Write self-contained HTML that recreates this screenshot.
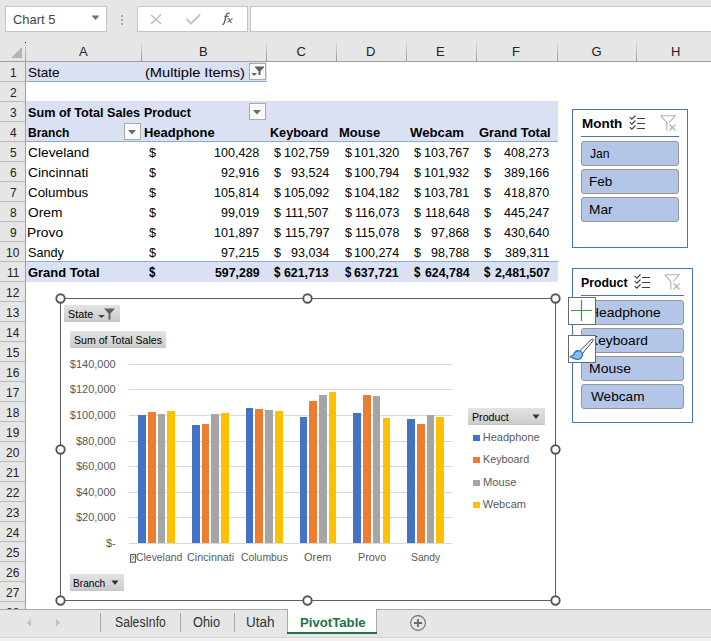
<!DOCTYPE html>
<html><head><meta charset="utf-8">
<style>
*{margin:0;padding:0;box-sizing:border-box}
html,body{width:711px;height:641px;overflow:hidden;background:#fff;font-family:"Liberation Sans",sans-serif;position:relative}
.a{position:absolute}
.t{position:absolute;white-space:nowrap;line-height:1;transform-origin:0 0}
</style></head><body>
<div class="a" style="left:0px;top:0px;width:711px;height:62px;background:#e6e6e6"></div>
<div class="a" style="left:5px;top:6px;width:102px;height:26px;background:#fff;border:1px solid #c6c6c6"></div>
<div class="t" style="left:12.70px;top:13.00px;font-size:13px;color:#444;transform:scaleX(0.9953);">Chart 5</div>
<svg class="a" style="left:91px;top:15px" width="10" height="6"><path d="M0.5 0.5 L8.5 0.5 L4.5 5 Z" fill="#707070"/></svg>
<div class="a" style="left:121px;top:15px;width:2px;height:2px;background:#a8a8a8"></div>
<div class="a" style="left:121px;top:19px;width:2px;height:2px;background:#a8a8a8"></div>
<div class="a" style="left:121px;top:23px;width:2px;height:2px;background:#a8a8a8"></div>
<div class="a" style="left:137px;top:6px;width:111px;height:26px;background:#fff;border:1px solid #c6c6c6"></div>
<div class="a" style="left:250px;top:6px;width:470px;height:26px;background:#fff;border:1px solid #c6c6c6"></div>
<svg class="a" style="left:149px;top:13px" width="16" height="14"><path d="M2 2 L12 11 M12 1.5 L2 11" stroke="#bdbdbd" stroke-width="1.6" fill="none"/></svg>
<svg class="a" style="left:185px;top:12px" width="18" height="14"><path d="M1.5 7 L6 11.5 L15 2.5" stroke="#c4c4c4" stroke-width="2" fill="none"/></svg>
<svg class="a" style="left:215px;top:8px" width="30" height="22"><path d="M7.3 16.3 Q8.6 16.8 9.4 14.5 L11.3 7 Q12 4.6 14.6 5.5" stroke="#666" stroke-width="1.4" fill="none"/><path d="M9.2 8.4 H13.6" stroke="#666" stroke-width="1.2"/><path d="M12.6 10.7 Q14 10 14.8 12 L15.6 14 Q16 14.6 17 14 M17.6 10.6 Q16.5 11 14.2 13.2 Q13.2 14.2 12.2 14.2" stroke="#666" stroke-width="1.1" fill="none"/></svg>
<div class="a" style="left:0px;top:61px;width:711px;height:1px;background:#9e9e9e"></div>
<div class="a" style="left:0px;top:62px;width:26px;height:547px;background:#e6e6e6"></div>
<div class="a" style="left:25px;top:43px;width:1px;height:18px;background:linear-gradient(#d8d8d8,#9a9a9a)"></div>
<div class="a" style="left:25px;top:61px;width:1px;height:548px;background:#9e9e9e"></div>
<div class="a" style="left:25px;top:42px;width:1px;height:1px;background:#000"></div>
<svg class="a" style="left:10px;top:46px" width="13" height="13"><path d="M12 1 L12 12 L1 12 Z" fill="#b5b5b5"/></svg>
<div class="a" style="left:141px;top:42px;width:1px;height:19px;background:linear-gradient(#dadada,#9a9a9a)"></div>
<div class="a" style="left:266px;top:42px;width:1px;height:19px;background:linear-gradient(#dadada,#9a9a9a)"></div>
<div class="a" style="left:336px;top:42px;width:1px;height:19px;background:linear-gradient(#dadada,#9a9a9a)"></div>
<div class="a" style="left:406px;top:42px;width:1px;height:19px;background:linear-gradient(#dadada,#9a9a9a)"></div>
<div class="a" style="left:476px;top:42px;width:1px;height:19px;background:linear-gradient(#dadada,#9a9a9a)"></div>
<div class="a" style="left:557px;top:42px;width:1px;height:19px;background:linear-gradient(#dadada,#9a9a9a)"></div>
<div class="a" style="left:636px;top:42px;width:1px;height:19px;background:linear-gradient(#dadada,#9a9a9a)"></div>
<div class="t" style="left:79.00px;top:45.00px;font-size:13px;color:#222;">A</div>
<div class="t" style="left:199.00px;top:45.00px;font-size:13px;color:#222;">B</div>
<div class="t" style="left:296.50px;top:45.00px;font-size:13px;color:#222;">C</div>
<div class="t" style="left:366.00px;top:45.00px;font-size:13px;color:#222;">D</div>
<div class="t" style="left:436.00px;top:45.00px;font-size:13px;color:#222;">E</div>
<div class="t" style="left:512.00px;top:45.00px;font-size:13px;color:#222;">F</div>
<div class="t" style="left:591.50px;top:45.00px;font-size:13px;color:#222;">G</div>
<div class="t" style="left:671.00px;top:45.00px;font-size:13px;color:#222;">H</div>
<div class="a" style="left:0px;top:81px;width:25px;height:1px;background:#b9b9b9"></div>
<div class="t" style="left:9.58px;top:66.00px;font-size:13px;color:#222;transform:scaleX(0.9200);">1</div>
<div class="a" style="left:0px;top:101px;width:25px;height:1px;background:#b9b9b9"></div>
<div class="t" style="left:9.58px;top:86.00px;font-size:13px;color:#222;transform:scaleX(0.9200);">2</div>
<div class="a" style="left:0px;top:121px;width:25px;height:1px;background:#b9b9b9"></div>
<div class="t" style="left:9.58px;top:106.00px;font-size:13px;color:#222;transform:scaleX(0.9200);">3</div>
<div class="a" style="left:0px;top:141px;width:25px;height:1px;background:#b9b9b9"></div>
<div class="t" style="left:9.58px;top:126.00px;font-size:13px;color:#222;transform:scaleX(0.9200);">4</div>
<div class="a" style="left:0px;top:161px;width:25px;height:1px;background:#b9b9b9"></div>
<div class="t" style="left:9.58px;top:146.00px;font-size:13px;color:#222;transform:scaleX(0.9200);">5</div>
<div class="a" style="left:0px;top:181px;width:25px;height:1px;background:#b9b9b9"></div>
<div class="t" style="left:9.58px;top:166.00px;font-size:13px;color:#222;transform:scaleX(0.9200);">6</div>
<div class="a" style="left:0px;top:201px;width:25px;height:1px;background:#b9b9b9"></div>
<div class="t" style="left:9.58px;top:186.00px;font-size:13px;color:#222;transform:scaleX(0.9200);">7</div>
<div class="a" style="left:0px;top:221px;width:25px;height:1px;background:#b9b9b9"></div>
<div class="t" style="left:9.58px;top:206.00px;font-size:13px;color:#222;transform:scaleX(0.9200);">8</div>
<div class="a" style="left:0px;top:241px;width:25px;height:1px;background:#b9b9b9"></div>
<div class="t" style="left:9.58px;top:226.00px;font-size:13px;color:#222;transform:scaleX(0.9200);">9</div>
<div class="a" style="left:0px;top:261px;width:25px;height:1px;background:#b9b9b9"></div>
<div class="t" style="left:6.25px;top:246.00px;font-size:13px;color:#222;transform:scaleX(0.9200);">10</div>
<div class="a" style="left:0px;top:281px;width:25px;height:1px;background:#b9b9b9"></div>
<div class="t" style="left:6.70px;top:266.00px;font-size:13px;color:#222;transform:scaleX(0.9200);">11</div>
<div class="a" style="left:0px;top:301px;width:25px;height:1px;background:#b9b9b9"></div>
<div class="t" style="left:6.25px;top:286.00px;font-size:13px;color:#222;transform:scaleX(0.9200);">12</div>
<div class="a" style="left:0px;top:321px;width:25px;height:1px;background:#b9b9b9"></div>
<div class="t" style="left:6.25px;top:306.00px;font-size:13px;color:#222;transform:scaleX(0.9200);">13</div>
<div class="a" style="left:0px;top:341px;width:25px;height:1px;background:#b9b9b9"></div>
<div class="t" style="left:6.25px;top:326.00px;font-size:13px;color:#222;transform:scaleX(0.9200);">14</div>
<div class="a" style="left:0px;top:361px;width:25px;height:1px;background:#b9b9b9"></div>
<div class="t" style="left:6.25px;top:346.00px;font-size:13px;color:#222;transform:scaleX(0.9200);">15</div>
<div class="a" style="left:0px;top:381px;width:25px;height:1px;background:#b9b9b9"></div>
<div class="t" style="left:6.25px;top:366.00px;font-size:13px;color:#222;transform:scaleX(0.9200);">16</div>
<div class="a" style="left:0px;top:401px;width:25px;height:1px;background:#b9b9b9"></div>
<div class="t" style="left:6.25px;top:386.00px;font-size:13px;color:#222;transform:scaleX(0.9200);">17</div>
<div class="a" style="left:0px;top:421px;width:25px;height:1px;background:#b9b9b9"></div>
<div class="t" style="left:6.25px;top:406.00px;font-size:13px;color:#222;transform:scaleX(0.9200);">18</div>
<div class="a" style="left:0px;top:441px;width:25px;height:1px;background:#b9b9b9"></div>
<div class="t" style="left:6.25px;top:426.00px;font-size:13px;color:#222;transform:scaleX(0.9200);">19</div>
<div class="a" style="left:0px;top:461px;width:25px;height:1px;background:#b9b9b9"></div>
<div class="t" style="left:6.25px;top:446.00px;font-size:13px;color:#222;transform:scaleX(0.9200);">20</div>
<div class="a" style="left:0px;top:481px;width:25px;height:1px;background:#b9b9b9"></div>
<div class="t" style="left:6.25px;top:466.00px;font-size:13px;color:#222;transform:scaleX(0.9200);">21</div>
<div class="a" style="left:0px;top:501px;width:25px;height:1px;background:#b9b9b9"></div>
<div class="t" style="left:6.25px;top:486.00px;font-size:13px;color:#222;transform:scaleX(0.9200);">22</div>
<div class="a" style="left:0px;top:521px;width:25px;height:1px;background:#b9b9b9"></div>
<div class="t" style="left:6.25px;top:506.00px;font-size:13px;color:#222;transform:scaleX(0.9200);">23</div>
<div class="a" style="left:0px;top:541px;width:25px;height:1px;background:#b9b9b9"></div>
<div class="t" style="left:6.25px;top:526.00px;font-size:13px;color:#222;transform:scaleX(0.9200);">24</div>
<div class="a" style="left:0px;top:561px;width:25px;height:1px;background:#b9b9b9"></div>
<div class="t" style="left:6.25px;top:546.00px;font-size:13px;color:#222;transform:scaleX(0.9200);">25</div>
<div class="a" style="left:0px;top:581px;width:25px;height:1px;background:#b9b9b9"></div>
<div class="t" style="left:6.25px;top:566.00px;font-size:13px;color:#222;transform:scaleX(0.9200);">26</div>
<div class="a" style="left:0px;top:601px;width:25px;height:1px;background:#b9b9b9"></div>
<div class="t" style="left:6.25px;top:586.00px;font-size:13px;color:#222;transform:scaleX(0.9200);">27</div>
<div class="a" style="left:0px;top:621px;width:25px;height:1px;background:#b9b9b9"></div>
<div class="t" style="left:6.25px;top:606.00px;font-size:13px;color:#222;transform:scaleX(0.9200);">28</div>
<div class="a" style="left:26px;top:62px;width:241px;height:19px;background:#d9e1f2"></div>
<div class="a" style="left:26px;top:81px;width:241px;height:1px;background:#8ea9db"></div>
<div class="a" style="left:26px;top:101px;width:532px;height:40px;background:#d9e1f2"></div>
<div class="a" style="left:26px;top:141px;width:532px;height:1px;background:#8ea9db"></div>
<div class="a" style="left:26px;top:261px;width:532px;height:1px;background:#8ea9db"></div>
<div class="a" style="left:26px;top:262px;width:532px;height:20px;background:#d9e1f2"></div>
<div class="t" style="left:28.10px;top:66.00px;font-size:13px;color:#000;transform:scaleX(1.0423);">State</div>
<div class="t" style="left:144.60px;top:66.00px;font-size:13px;color:#000;transform:scaleX(1.1252);">(Multiple Items)</div>
<div class="a" style="left:249px;top:63px;width:17px;height:17px;background:#fafafa;border:1px solid #a9a9a9"></div>
<svg class="a" style="left:249px;top:63px" width="17" height="17"><path d="M2.5 10 L8 10 L5.2 13 Z" fill="#606060"/><path d="M6 3.5 L15 3.5 L15 4.5 L11.5 8 L11.5 12 L9.5 12 L9.5 8 L6 4.5 Z" fill="#606060"/></svg>
<div class="t" style="left:28.20px;top:105.57px;font-size:13.5px;font-weight:bold;color:#000;transform:scaleX(0.9357);">Sum of Total Sales</div>
<div class="t" style="left:144.30px;top:105.57px;font-size:13.5px;font-weight:bold;color:#000;transform:scaleX(0.9184);">Product</div>
<div class="a" style="left:249px;top:103px;width:17px;height:17px;background:#fafafa;border:1px solid #a9a9a9"></div>
<svg class="a" style="left:253px;top:110px" width="9" height="5"><path d="M0 0 L8 0 L4 4.5 Z" fill="#6a6a6a"/></svg>
<div class="t" style="left:28.20px;top:125.57px;font-size:13.5px;font-weight:bold;color:#000;transform:scaleX(0.8905);">Branch</div>
<div class="a" style="left:124px;top:123px;width:17px;height:17px;background:#fafafa;border:1px solid #a9a9a9"></div>
<svg class="a" style="left:128px;top:130px" width="9" height="5"><path d="M0 0 L8 0 L4 4.5 Z" fill="#6a6a6a"/></svg>
<div class="t" style="left:144.30px;top:125.57px;font-size:13.5px;font-weight:bold;color:#000;transform:scaleX(0.9608);">Headphone</div>
<div class="t" style="left:269.50px;top:125.57px;font-size:13.5px;font-weight:bold;color:#000;transform:scaleX(0.9352);">Keyboard</div>
<div class="t" style="left:339.20px;top:125.57px;font-size:13.5px;font-weight:bold;color:#000;transform:scaleX(0.9619);">Mouse</div>
<div class="t" style="left:409.50px;top:125.57px;font-size:13.5px;font-weight:bold;color:#000;transform:scaleX(0.9770);">Webcam</div>
<div class="t" style="left:479.20px;top:125.57px;font-size:13.5px;font-weight:bold;color:#000;transform:scaleX(0.9595);">Grand Total</div>
<div class="t" style="left:28.40px;top:146.00px;font-size:13px;color:#000;transform:scaleX(1.0576);">Cleveland</div>
<div class="t" style="left:149.20px;top:146.00px;font-size:13px;color:#000;transform:scaleX(0.9640);">$</div>
<div class="t" style="left:214.12px;top:146.00px;font-size:13px;color:#000;transform:scaleX(0.9640);">100,428</div>
<div class="t" style="left:274.20px;top:146.00px;font-size:13px;color:#000;transform:scaleX(0.9640);">$</div>
<div class="t" style="left:283.62px;top:146.00px;font-size:13px;color:#000;transform:scaleX(0.9640);">102,759</div>
<div class="t" style="left:345.20px;top:146.00px;font-size:13px;color:#000;transform:scaleX(0.9640);">$</div>
<div class="t" style="left:353.82px;top:146.00px;font-size:13px;color:#000;transform:scaleX(0.9640);">101,320</div>
<div class="t" style="left:414.20px;top:146.00px;font-size:13px;color:#000;transform:scaleX(0.9640);">$</div>
<div class="t" style="left:423.62px;top:146.00px;font-size:13px;color:#000;transform:scaleX(0.9640);">103,767</div>
<div class="t" style="left:484.20px;top:146.00px;font-size:13px;color:#000;transform:scaleX(0.9640);">$</div>
<div class="t" style="left:504.42px;top:146.00px;font-size:13px;color:#000;transform:scaleX(0.9640);">408,273</div>
<div class="t" style="left:28.40px;top:166.00px;font-size:13px;color:#000;transform:scaleX(1.0560);">Cincinnati</div>
<div class="t" style="left:149.20px;top:166.00px;font-size:13px;color:#000;transform:scaleX(0.9640);">$</div>
<div class="t" style="left:221.09px;top:166.00px;font-size:13px;color:#000;transform:scaleX(0.9640);">92,916</div>
<div class="t" style="left:274.20px;top:166.00px;font-size:13px;color:#000;transform:scaleX(0.9640);">$</div>
<div class="t" style="left:290.59px;top:166.00px;font-size:13px;color:#000;transform:scaleX(0.9640);">93,524</div>
<div class="t" style="left:345.20px;top:166.00px;font-size:13px;color:#000;transform:scaleX(0.9640);">$</div>
<div class="t" style="left:353.82px;top:166.00px;font-size:13px;color:#000;transform:scaleX(0.9640);">100,794</div>
<div class="t" style="left:414.20px;top:166.00px;font-size:13px;color:#000;transform:scaleX(0.9640);">$</div>
<div class="t" style="left:423.62px;top:166.00px;font-size:13px;color:#000;transform:scaleX(0.9640);">101,932</div>
<div class="t" style="left:484.20px;top:166.00px;font-size:13px;color:#000;transform:scaleX(0.9640);">$</div>
<div class="t" style="left:504.42px;top:166.00px;font-size:13px;color:#000;transform:scaleX(0.9640);">389,166</div>
<div class="t" style="left:28.40px;top:186.00px;font-size:13px;color:#000;transform:scaleX(1.0301);">Columbus</div>
<div class="t" style="left:149.20px;top:186.00px;font-size:13px;color:#000;transform:scaleX(0.9640);">$</div>
<div class="t" style="left:214.12px;top:186.00px;font-size:13px;color:#000;transform:scaleX(0.9640);">105,814</div>
<div class="t" style="left:274.20px;top:186.00px;font-size:13px;color:#000;transform:scaleX(0.9640);">$</div>
<div class="t" style="left:283.62px;top:186.00px;font-size:13px;color:#000;transform:scaleX(0.9640);">105,092</div>
<div class="t" style="left:345.20px;top:186.00px;font-size:13px;color:#000;transform:scaleX(0.9640);">$</div>
<div class="t" style="left:353.82px;top:186.00px;font-size:13px;color:#000;transform:scaleX(0.9640);">104,182</div>
<div class="t" style="left:414.20px;top:186.00px;font-size:13px;color:#000;transform:scaleX(0.9640);">$</div>
<div class="t" style="left:423.62px;top:186.00px;font-size:13px;color:#000;transform:scaleX(0.9640);">103,781</div>
<div class="t" style="left:484.20px;top:186.00px;font-size:13px;color:#000;transform:scaleX(0.9640);">$</div>
<div class="t" style="left:504.42px;top:186.00px;font-size:13px;color:#000;transform:scaleX(0.9640);">418,870</div>
<div class="t" style="left:28.40px;top:206.00px;font-size:13px;color:#000;transform:scaleX(1.0578);">Orem</div>
<div class="t" style="left:149.20px;top:206.00px;font-size:13px;color:#000;transform:scaleX(0.9640);">$</div>
<div class="t" style="left:221.09px;top:206.00px;font-size:13px;color:#000;transform:scaleX(0.9640);">99,019</div>
<div class="t" style="left:274.20px;top:206.00px;font-size:13px;color:#000;transform:scaleX(0.9640);">$</div>
<div class="t" style="left:285.48px;top:206.00px;font-size:13px;color:#000;transform:scaleX(0.9640);">111,507</div>
<div class="t" style="left:345.20px;top:206.00px;font-size:13px;color:#000;transform:scaleX(0.9640);">$</div>
<div class="t" style="left:354.75px;top:206.00px;font-size:13px;color:#000;transform:scaleX(0.9640);">116,073</div>
<div class="t" style="left:414.20px;top:206.00px;font-size:13px;color:#000;transform:scaleX(0.9640);">$</div>
<div class="t" style="left:424.55px;top:206.00px;font-size:13px;color:#000;transform:scaleX(0.9640);">118,648</div>
<div class="t" style="left:484.20px;top:206.00px;font-size:13px;color:#000;transform:scaleX(0.9640);">$</div>
<div class="t" style="left:504.42px;top:206.00px;font-size:13px;color:#000;transform:scaleX(0.9640);">445,247</div>
<div class="t" style="left:27.34px;top:226.00px;font-size:13px;color:#000;transform:scaleX(1.0632);">Provo</div>
<div class="t" style="left:149.20px;top:226.00px;font-size:13px;color:#000;transform:scaleX(0.9640);">$</div>
<div class="t" style="left:214.12px;top:226.00px;font-size:13px;color:#000;transform:scaleX(0.9640);">101,897</div>
<div class="t" style="left:274.20px;top:226.00px;font-size:13px;color:#000;transform:scaleX(0.9640);">$</div>
<div class="t" style="left:284.55px;top:226.00px;font-size:13px;color:#000;transform:scaleX(0.9640);">115,797</div>
<div class="t" style="left:345.20px;top:226.00px;font-size:13px;color:#000;transform:scaleX(0.9640);">$</div>
<div class="t" style="left:354.75px;top:226.00px;font-size:13px;color:#000;transform:scaleX(0.9640);">115,078</div>
<div class="t" style="left:414.20px;top:226.00px;font-size:13px;color:#000;transform:scaleX(0.9640);">$</div>
<div class="t" style="left:430.59px;top:226.00px;font-size:13px;color:#000;transform:scaleX(0.9640);">97,868</div>
<div class="t" style="left:484.20px;top:226.00px;font-size:13px;color:#000;transform:scaleX(0.9640);">$</div>
<div class="t" style="left:504.42px;top:226.00px;font-size:13px;color:#000;transform:scaleX(0.9640);">430,640</div>
<div class="t" style="left:28.40px;top:246.00px;font-size:13px;color:#000;transform:scaleX(0.9743);">Sandy</div>
<div class="t" style="left:149.20px;top:246.00px;font-size:13px;color:#000;transform:scaleX(0.9640);">$</div>
<div class="t" style="left:221.09px;top:246.00px;font-size:13px;color:#000;transform:scaleX(0.9640);">97,215</div>
<div class="t" style="left:274.20px;top:246.00px;font-size:13px;color:#000;transform:scaleX(0.9640);">$</div>
<div class="t" style="left:290.59px;top:246.00px;font-size:13px;color:#000;transform:scaleX(0.9640);">93,034</div>
<div class="t" style="left:345.20px;top:246.00px;font-size:13px;color:#000;transform:scaleX(0.9640);">$</div>
<div class="t" style="left:353.82px;top:246.00px;font-size:13px;color:#000;transform:scaleX(0.9640);">100,274</div>
<div class="t" style="left:414.20px;top:246.00px;font-size:13px;color:#000;transform:scaleX(0.9640);">$</div>
<div class="t" style="left:430.59px;top:246.00px;font-size:13px;color:#000;transform:scaleX(0.9640);">98,788</div>
<div class="t" style="left:484.20px;top:246.00px;font-size:13px;color:#000;transform:scaleX(0.9640);">$</div>
<div class="t" style="left:505.35px;top:246.00px;font-size:13px;color:#000;transform:scaleX(0.9640);">389,311</div>
<div class="t" style="left:28.20px;top:265.57px;font-size:13.5px;font-weight:bold;color:#000;transform:scaleX(0.9581);">Grand Total</div>
<div class="t" style="left:149.40px;top:265.15px;font-size:14px;font-weight:bold;color:#000;transform:scaleX(0.8200);">$</div>
<div class="t" style="left:215.21px;top:265.57px;font-size:13.5px;font-weight:bold;color:#000;transform:scaleX(0.9150);">597,289</div>
<div class="t" style="left:274.40px;top:265.15px;font-size:14px;font-weight:bold;color:#000;transform:scaleX(0.8200);">$</div>
<div class="t" style="left:283.50px;top:265.57px;font-size:13.5px;font-weight:bold;color:#000;transform:scaleX(0.9150);">621,713</div>
<div class="t" style="left:345.40px;top:265.15px;font-size:14px;font-weight:bold;color:#000;transform:scaleX(0.8200);">$</div>
<div class="t" style="left:354.20px;top:265.57px;font-size:13.5px;font-weight:bold;color:#000;transform:scaleX(0.9150);">637,721</div>
<div class="t" style="left:414.40px;top:265.15px;font-size:14px;font-weight:bold;color:#000;transform:scaleX(0.8200);">$</div>
<div class="t" style="left:424.50px;top:265.57px;font-size:13.5px;font-weight:bold;color:#000;transform:scaleX(0.9150);">624,784</div>
<div class="t" style="left:484.40px;top:265.15px;font-size:14px;font-weight:bold;color:#000;transform:scaleX(0.8200);">$</div>
<div class="t" style="left:495.31px;top:265.57px;font-size:13.5px;font-weight:bold;color:#000;transform:scaleX(0.9150);">2,481,507</div>
<div class="a" style="left:572px;top:109px;width:116px;height:139px;border:1px solid #4472c4;background:#fff"></div>
<div class="t" style="left:582.00px;top:117.00px;font-size:13px;font-weight:bold;color:#000;transform:scaleX(1.0348);">Month</div>
<svg class="a" style="left:629px;top:115px" width="18" height="16"><path d="M0.8 2.2 L2.8 4.2 L6.5 0.5 M0.8 7.2 L2.8 9.2 L6.5 5.5 M0.8 12.2 L2.8 14.2 L6.5 10.5" stroke="#404040" stroke-width="1.1" fill="none"/><path d="M8 3.5 H16 M8 8.5 H16 M8 13.5 H16" stroke="#404040" stroke-width="1.1" fill="none"/></svg>
<svg class="a" style="left:660px;top:115px" width="18" height="17"><path d="M0.8 0.8 H15.2 L9.2 7.5 M0.8 0.8 L6.8 7.5 V15.5 M0.8 0.8" stroke="#b0b0b0" stroke-width="1.1" fill="none"/><path d="M9.5 9.5 L15.5 15.5 M15.5 9.5 L9.5 15.5" stroke="#b0b0b0" stroke-width="1.1" fill="none"/></svg>
<div class="a" style="left:581px;top:136px;width:98px;height:1px;background:#4472c4"></div>
<div class="a" style="left:581px;top:141px;width:98px;height:25px;background:#b4c6e7;border:1px solid #959595;border-radius:3px"></div>
<div class="t" style="left:590.40px;top:147.00px;font-size:13px;color:#000;transform:scaleX(0.9358);">Jan</div>
<div class="a" style="left:581px;top:169px;width:98px;height:25px;background:#b4c6e7;border:1px solid #959595;border-radius:3px"></div>
<div class="t" style="left:589.36px;top:175.00px;font-size:13px;color:#000;transform:scaleX(1.0392);">Feb</div>
<div class="a" style="left:581px;top:197px;width:98px;height:25px;background:#b4c6e7;border:1px solid #959595;border-radius:3px"></div>
<div class="t" style="left:589.34px;top:203.00px;font-size:13px;color:#000;transform:scaleX(1.0563);">Mar</div>
<div class="a" style="left:572px;top:268px;width:121px;height:155px;border:1px solid #4472c4;background:#fff"></div>
<div class="t" style="left:581.30px;top:276.00px;font-size:13px;font-weight:bold;color:#000;transform:scaleX(0.9481);">Product</div>
<svg class="a" style="left:634px;top:274px" width="18" height="16"><path d="M0.8 2.2 L2.8 4.2 L6.5 0.5 M0.8 7.2 L2.8 9.2 L6.5 5.5 M0.8 12.2 L2.8 14.2 L6.5 10.5" stroke="#404040" stroke-width="1.1" fill="none"/><path d="M8 3.5 H16 M8 8.5 H16 M8 13.5 H16" stroke="#404040" stroke-width="1.1" fill="none"/></svg>
<svg class="a" style="left:664px;top:274px" width="18" height="17"><path d="M0.8 0.8 H15.2 L9.2 7.5 M0.8 0.8 L6.8 7.5 V15.5 M0.8 0.8" stroke="#b0b0b0" stroke-width="1.1" fill="none"/><path d="M9.5 9.5 L15.5 15.5 M15.5 9.5 L9.5 15.5" stroke="#b0b0b0" stroke-width="1.1" fill="none"/></svg>
<div class="a" style="left:581px;top:295px;width:103px;height:1px;background:#4472c4"></div>
<div class="a" style="left:581px;top:300px;width:103px;height:25px;background:#b4c6e7;border:1px solid #959595;border-radius:3px"></div>
<div class="t" style="left:589.43px;top:305.50px;font-size:13px;color:#000;transform:scaleX(1.0667);">Headphone</div>
<div class="a" style="left:581px;top:328px;width:103px;height:25px;background:#b4c6e7;border:1px solid #959595;border-radius:3px"></div>
<div class="t" style="left:589.44px;top:333.50px;font-size:13px;color:#000;transform:scaleX(1.0584);">Keyboard</div>
<div class="a" style="left:581px;top:356px;width:103px;height:25px;background:#b4c6e7;border:1px solid #959595;border-radius:3px"></div>
<div class="t" style="left:589.43px;top:361.50px;font-size:13px;color:#000;transform:scaleX(1.0744);">Mouse</div>
<div class="a" style="left:581px;top:384px;width:103px;height:25px;background:#b4c6e7;border:1px solid #959595;border-radius:3px"></div>
<div class="t" style="left:590.50px;top:389.50px;font-size:13px;color:#000;transform:scaleX(1.0473);">Webcam</div>
<div class="a" style="left:60px;top:298px;width:496px;height:303px;background:#fff;border:1px solid #5f5f5f"></div>
<div class="a" style="left:64px;top:305px;width:56px;height:17px;background:linear-gradient(#e3e3e3,#cdcdcd);border-bottom:1px solid #c6c6c6"></div>
<div class="t" style="left:67.70px;top:308.69px;font-size:11px;color:#000;transform:scaleX(0.9817);">State</div>
<svg class="a" style="left:97px;top:307px" width="22" height="14"><path d="M1 8 H8 L4.5 11 Z" fill="#404040"/><path d="M7 1.5 H18 L13.5 6.5 V12.5 H11.5 V6.5 Z" fill="#606060"/></svg>
<div class="a" style="left:70px;top:331px;width:96px;height:17px;background:linear-gradient(#e3e3e3,#cdcdcd);border-bottom:1px solid #c6c6c6"></div>
<div class="t" style="left:73.50px;top:334.69px;font-size:11px;color:#000;transform:scaleX(0.9619);">Sum of Total Sales</div>
<svg class="a" style="left:0;top:0" width="711" height="641"><path d="M129.0 543.5 H452.0" stroke="#d9d9d9" stroke-width="1"/><path d="M129.0 517.5 H452.0" stroke="#d9d9d9" stroke-width="1"/><path d="M129.0 492.5 H452.0" stroke="#d9d9d9" stroke-width="1"/><path d="M129.0 466.5 H452.0" stroke="#d9d9d9" stroke-width="1"/><path d="M129.0 441.5 H452.0" stroke="#d9d9d9" stroke-width="1"/><path d="M129.0 415.5 H452.0" stroke="#d9d9d9" stroke-width="1"/><path d="M129.0 389.5 H452.0" stroke="#d9d9d9" stroke-width="1"/><path d="M129.0 364.5 H452.0" stroke="#d9d9d9" stroke-width="1"/><rect x="138" y="414.95" width="8" height="128.05" fill="#4472c4" shape-rendering="crispEdges"/><rect x="148" y="411.98" width="8" height="131.02" fill="#ed7d31" shape-rendering="crispEdges"/><rect x="158" y="413.82" width="7" height="129.18" fill="#a5a5a5" shape-rendering="crispEdges"/><rect x="167" y="410.70" width="8" height="132.30" fill="#ffc000" shape-rendering="crispEdges"/><rect x="192" y="424.53" width="8" height="118.47" fill="#4472c4" shape-rendering="crispEdges"/><rect x="202" y="423.76" width="7" height="119.24" fill="#ed7d31" shape-rendering="crispEdges"/><rect x="211" y="414.49" width="8" height="128.51" fill="#a5a5a5" shape-rendering="crispEdges"/><rect x="221" y="413.04" width="8" height="129.96" fill="#ffc000" shape-rendering="crispEdges"/><rect x="246" y="408.09" width="7" height="134.91" fill="#4472c4" shape-rendering="crispEdges"/><rect x="255" y="409.01" width="8" height="133.99" fill="#ed7d31" shape-rendering="crispEdges"/><rect x="265" y="410.17" width="8" height="132.83" fill="#a5a5a5" shape-rendering="crispEdges"/><rect x="275" y="410.68" width="8" height="132.32" fill="#ffc000" shape-rendering="crispEdges"/><rect x="300" y="416.75" width="7" height="126.25" fill="#4472c4" shape-rendering="crispEdges"/><rect x="309" y="400.83" width="8" height="142.17" fill="#ed7d31" shape-rendering="crispEdges"/><rect x="319" y="395.01" width="8" height="147.99" fill="#a5a5a5" shape-rendering="crispEdges"/><rect x="329" y="391.72" width="7" height="151.28" fill="#ffc000" shape-rendering="crispEdges"/><rect x="353" y="413.08" width="8" height="129.92" fill="#4472c4" shape-rendering="crispEdges"/><rect x="363" y="395.36" width="8" height="147.64" fill="#ed7d31" shape-rendering="crispEdges"/><rect x="373" y="396.28" width="7" height="146.72" fill="#a5a5a5" shape-rendering="crispEdges"/><rect x="383" y="418.22" width="7" height="124.78" fill="#ffc000" shape-rendering="crispEdges"/><rect x="407" y="419.05" width="8" height="123.95" fill="#4472c4" shape-rendering="crispEdges"/><rect x="417" y="424.38" width="8" height="118.62" fill="#ed7d31" shape-rendering="crispEdges"/><rect x="427" y="415.15" width="7" height="127.85" fill="#a5a5a5" shape-rendering="crispEdges"/><rect x="436" y="417.05" width="8" height="125.95" fill="#ffc000" shape-rendering="crispEdges"/></svg>
<div class="t" style="left:105.88px;top:537.69px;font-size:11px;color:#595959;">$-</div>
<div class="t" style="left:75.96px;top:511.69px;font-size:11px;color:#595959;">$20,000</div>
<div class="t" style="left:75.96px;top:486.69px;font-size:11px;color:#595959;">$40,000</div>
<div class="t" style="left:75.96px;top:460.69px;font-size:11px;color:#595959;">$60,000</div>
<div class="t" style="left:75.96px;top:435.69px;font-size:11px;color:#595959;">$80,000</div>
<div class="t" style="left:69.84px;top:409.69px;font-size:11px;color:#595959;">$100,000</div>
<div class="t" style="left:69.84px;top:383.69px;font-size:11px;color:#595959;">$120,000</div>
<div class="t" style="left:69.84px;top:358.69px;font-size:11px;color:#595959;">$140,000</div>
<div class="t" style="left:135.70px;top:552.39px;font-size:11px;color:#595959;transform:scaleX(0.9467);">Cleveland</div>
<div class="t" style="left:186.50px;top:552.39px;font-size:11px;color:#595959;transform:scaleX(0.9779);">Cincinnati</div>
<div class="t" style="left:240.70px;top:552.39px;font-size:11px;color:#595959;transform:scaleX(0.9456);">Columbus</div>
<div class="t" style="left:304.20px;top:552.39px;font-size:11px;color:#595959;transform:scaleX(0.9950);">Orem</div>
<div class="t" style="left:357.80px;top:552.39px;font-size:11px;color:#595959;transform:scaleX(0.9784);">Provo</div>
<div class="t" style="left:410.50px;top:552.39px;font-size:11px;color:#595959;transform:scaleX(0.9372);">Sandy</div>
<svg class="a" style="left:130px;top:554px" width="7" height="9"><rect x="0.6" y="0.6" width="4.8" height="7.6" fill="none" stroke="#595959" stroke-width="1.1"/><path d="M2 3 Q3 2 4 3 Q4 4 3 4.5 L2.5 6" stroke="#595959" stroke-width="0.8" fill="none"/></svg>
<div class="a" style="left:468px;top:408px;width:77px;height:17px;background:linear-gradient(#e3e3e3,#cdcdcd);border-bottom:1px solid #c6c6c6"></div>
<div class="t" style="left:471.60px;top:411.69px;font-size:11px;color:#000;transform:scaleX(0.9695);">Product</div>
<svg class="a" style="left:532px;top:414px" width="9" height="6"><path d="M0.5 0.5 H7.5 L4 5 Z" fill="#303030"/></svg>
<div class="a" style="left:473px;top:435px;width:7px;height:6px;background:#4472c4"></div>
<div class="t" style="left:482.80px;top:431.99px;font-size:11px;color:#595959;">Headphone</div>
<div class="a" style="left:473px;top:457px;width:7px;height:6px;background:#ed7d31"></div>
<div class="t" style="left:482.80px;top:454.29px;font-size:11px;color:#595959;transform:scaleX(0.9815);">Keyboard</div>
<div class="a" style="left:473px;top:480px;width:7px;height:6px;background:#a5a5a5"></div>
<div class="t" style="left:482.80px;top:476.59px;font-size:11px;color:#595959;transform:scaleX(1.0152);">Mouse</div>
<div class="a" style="left:473px;top:502px;width:7px;height:6px;background:#ffc000"></div>
<div class="t" style="left:482.80px;top:498.89px;font-size:11px;color:#595959;">Webcam</div>
<div class="a" style="left:70px;top:574px;width:54px;height:17px;background:linear-gradient(#e3e3e3,#cdcdcd);border-bottom:1px solid #c6c6c6"></div>
<div class="t" style="left:73.00px;top:577.69px;font-size:11px;color:#000;transform:scaleX(0.9213);">Branch</div>
<svg class="a" style="left:111px;top:580px" width="9" height="6"><path d="M0.5 0.5 H7.5 L4 5 Z" fill="#303030"/></svg>
<svg class="a" style="left:0;top:0" width="711" height="641"><circle cx="60.5" cy="298.5" r="4.2" fill="#fff" stroke="#555" stroke-width="1.9"/><circle cx="60.5" cy="449.5" r="4.2" fill="#fff" stroke="#555" stroke-width="1.9"/><circle cx="60.5" cy="600.5" r="4.2" fill="#fff" stroke="#555" stroke-width="1.9"/><circle cx="307.5" cy="298.5" r="4.2" fill="#fff" stroke="#555" stroke-width="1.9"/><circle cx="307.5" cy="600.5" r="4.2" fill="#fff" stroke="#555" stroke-width="1.9"/><circle cx="555.5" cy="298.5" r="4.2" fill="#fff" stroke="#555" stroke-width="1.9"/><circle cx="555.5" cy="449.5" r="4.2" fill="#fff" stroke="#555" stroke-width="1.9"/><circle cx="555.5" cy="600.5" r="4.2" fill="#fff" stroke="#555" stroke-width="1.9"/></svg>
<div class="a" style="left:568px;top:297px;width:28px;height:28px;background:#fff;border:1px solid #6a6a6a"></div>
<svg class="a" style="left:568px;top:297px" width="28" height="28"><path d="M3 13.5 H24 M13.5 3 V24" stroke="#2e9e48" stroke-width="1.2"/></svg>
<div class="a" style="left:568px;top:335px;width:28px;height:28px;background:#fff;border:1px solid #6a6a6a"></div>
<svg class="a" style="left:568px;top:335px" width="28" height="28"><path d="M11.3 16.4 L23.2 4.6 Q25.6 3 25.2 5.6 L14.4 18.6 Z" fill="#fff" stroke="#454545" stroke-width="1"/><path d="M14.6 18.8 C14.8 22.3 12 24.6 8.6 24.3 C6 24 4.3 22.3 1.8 21.6 C4 21.4 5.3 20.6 5.9 19.1 C6.8 16.6 9.2 15.3 11.6 16 C13.1 16.5 14.4 17.5 14.6 18.8 Z" fill="#88bdeb" stroke="#2479cf" stroke-width="1.3"/></svg>
<div class="a" style="left:0px;top:609px;width:711px;height:32px;background:#e6e6e6"></div>
<div class="a" style="left:0px;top:609px;width:711px;height:1px;background:#a8a8a8"></div>
<div class="a" style="left:0px;top:637px;width:711px;height:1px;background:#d4d4d4"></div>
<div class="a" style="left:0px;top:638px;width:711px;height:3px;background:#f0f0f0"></div>
<svg class="a" style="left:25px;top:617px" width="40" height="12"><path d="M6 1.8 L1.8 5.7 L6 9.6 Z M31 1.8 L35.2 5.7 L31 9.6 Z" fill="#c2c2c2"/></svg>
<div class="a" style="left:100px;top:613px;width:1px;height:19px;background:#a8a8a8"></div>
<div class="t" style="left:114.50px;top:615.15px;font-size:14px;color:#333;transform:scaleX(0.8705);">SalesInfo</div>
<div class="a" style="left:180px;top:613px;width:1px;height:19px;background:#a8a8a8"></div>
<div class="t" style="left:193.00px;top:615.15px;font-size:14px;color:#333;transform:scaleX(0.9132);">Ohio</div>
<div class="a" style="left:234px;top:613px;width:1px;height:19px;background:#a8a8a8"></div>
<div class="t" style="left:246.04px;top:615.15px;font-size:14px;color:#333;transform:scaleX(0.9609);">Utah</div>
<div class="a" style="left:287px;top:609px;width:90px;height:25px;background:#fff;border-left:1px solid #a8a8a8;border-right:1px solid #a8a8a8"></div>
<div class="a" style="left:287px;top:632px;width:90px;height:2px;background:#217346"></div>
<div class="t" style="left:299.50px;top:616.00px;font-size:13px;font-weight:bold;color:#217346;transform:scaleX(1.0133);">PivotTable</div>
<svg class="a" style="left:408px;top:613px" width="20" height="20"><circle cx="10" cy="10" r="7.4" fill="none" stroke="#707070" stroke-width="1.1"/><path d="M10 6 V14 M6 10 H14" stroke="#6a6a6a" stroke-width="1.8"/></svg>
</body></html>
